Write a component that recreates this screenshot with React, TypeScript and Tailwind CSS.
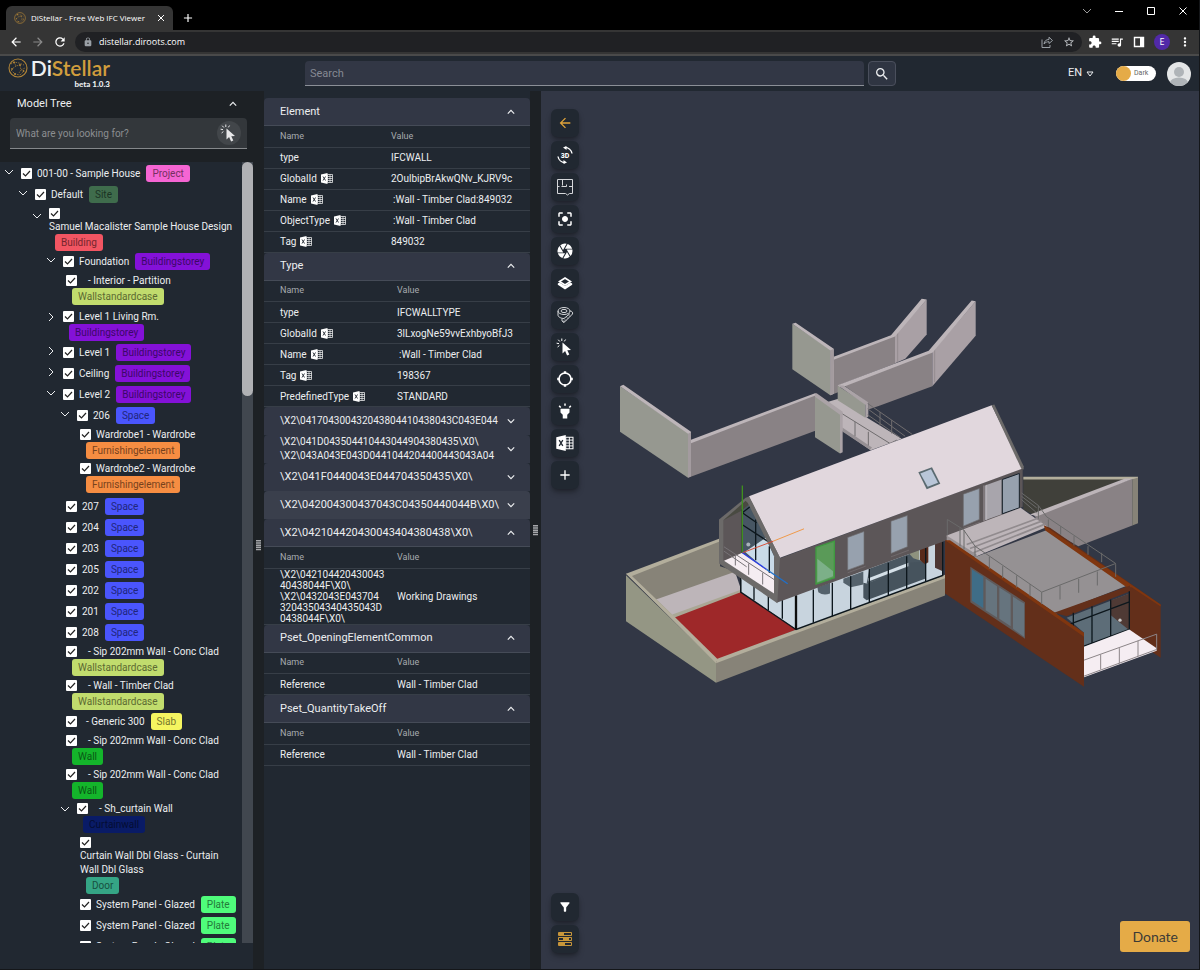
import { FC, ReactNode } from "react";
import clsx from "clsx";
import {
  MdAdd,
  MdArrowBack,
  MdArrowForward,
  MdCamera,
  MdCenterFocusStrong,
  MdExtension,
  MdFilterAlt,
  MdHighlight,
  MdLock,
  MdMoreVert,
  MdQueueMusic,
  MdRefresh,
  MdSearch,
  MdStarBorder,
} from "react-icons/md";

type Layout = "inline" | "below" | "wrapped";

interface TreeNode {
  id: string;
  label: string;
  kind: keyof typeof badgeColors;
  layout?: Layout;
  indentLabel?: boolean;
  open?: boolean;
  children?: TreeNode[];
}

const badgeColors = {
  Project: "bg-[#f565d3] text-[#76305f]",
  Site: "bg-[#3f6c4c] text-[#1b3424]",
  Building: "bg-[#f25562] text-[#74262d]",
  Buildingstorey: "bg-[#8411d8] text-[#3c0868]",
  Wallstandardcase: "bg-[#c1dc6d] text-[#5c6a32]",
  Space: "bg-[#4a55fd] text-[#20267c]",
  Furnishingelement: "bg-[#f68d42] text-[#76421d]",
  Slab: "bg-[#f5f560] text-[#77762c]",
  Wall: "bg-[#14b52b] text-[#0a5815]",
  Curtainwall: "bg-[#091b66] text-[#040d33]",
  Door: "bg-[#35a585] text-[#184f40]",
  Plate: "bg-[#4ffc7b] text-[#247a3a]",
};

const spaces: TreeNode[] = ["207", "204", "203", "205", "202", "201", "208"].map(
  (label) => ({ id: label, label, kind: "Space" })
);

const tree: TreeNode = {
  id: "project",
  label: "001-00 - Sample House",
  kind: "Project",
  open: true,
  children: [
    {
      id: "site",
      label: "Default",
      kind: "Site",
      open: true,
      children: [
        {
          id: "building",
          label: "Samuel Macalister Sample House Design",
          kind: "Building",
          layout: "wrapped",
          open: true,
          children: [
            {
              id: "foundation",
              label: "Foundation",
              kind: "Buildingstorey",
              open: true,
              children: [
                {
                  id: "partition",
                  label: "- Interior - Partition",
                  kind: "Wallstandardcase",
                  layout: "below",
                  indentLabel: true,
                },
              ],
            },
            {
              id: "living",
              label: "Level 1 Living Rm.",
              kind: "Buildingstorey",
              layout: "below",
              open: false,
            },
            { id: "level1", label: "Level 1", kind: "Buildingstorey", open: false },
            { id: "ceiling", label: "Ceiling", kind: "Buildingstorey", open: false },
            {
              id: "level2",
              label: "Level 2",
              kind: "Buildingstorey",
              open: true,
              children: [
                {
                  id: "206",
                  label: "206",
                  kind: "Space",
                  open: true,
                  children: [
                    {
                      id: "w1",
                      label: "Wardrobe1 - Wardrobe",
                      kind: "Furnishingelement",
                      layout: "below",
                    },
                    {
                      id: "w2",
                      label: "Wardrobe2 - Wardrobe",
                      kind: "Furnishingelement",
                      layout: "below",
                    },
                  ],
                },
                ...spaces,
                {
                  id: "sip1",
                  label: "- Sip 202mm Wall - Conc Clad",
                  kind: "Wallstandardcase",
                  layout: "below",
                  indentLabel: true,
                },
                {
                  id: "timber",
                  label: "- Wall - Timber Clad",
                  kind: "Wallstandardcase",
                  layout: "below",
                  indentLabel: true,
                },
                {
                  id: "generic",
                  label: "- Generic 300",
                  kind: "Slab",
                  indentLabel: true,
                },
                {
                  id: "sip2",
                  label: "- Sip 202mm Wall - Conc Clad",
                  kind: "Wall",
                  layout: "below",
                  indentLabel: true,
                },
                {
                  id: "sip3",
                  label: "- Sip 202mm Wall - Conc Clad",
                  kind: "Wall",
                  layout: "below",
                  indentLabel: true,
                },
                {
                  id: "curtain",
                  label: "- Sh_curtain Wall",
                  kind: "Curtainwall",
                  layout: "below",
                  indentLabel: true,
                  open: true,
                  children: [
                    {
                      id: "door",
                      label: "Curtain Wall Dbl Glass - Curtain Wall Dbl Glass",
                      kind: "Door",
                      layout: "wrapped",
                    },
                    { id: "p1", label: "System Panel - Glazed", kind: "Plate" },
                    { id: "p2", label: "System Panel - Glazed", kind: "Plate" },
                    { id: "p3", label: "System Panel - Glazed", kind: "Plate" },
                  ],
                },
              ],
            },
          ],
        },
      ],
    },
  ],
};

interface PropertyRow {
  name: string;
  value: string;
  excel?: boolean;
  indentValue?: boolean;
}

interface PropertyGroup {
  title: string;
  rows?: PropertyRow[];
  narrow?: boolean;
  highlighted?: boolean;
  longTitle?: boolean;
}

const groups: PropertyGroup[] = [
  {
    title: "Element",
    narrow: true,
    rows: [
      { name: "type", value: "IFCWALL" },
      { name: "GlobalId", value: "2OulbipBrAkwQNv_KJRV9c", excel: true },
      { name: "Name", value: ":Wall - Timber Clad:849032", excel: true, indentValue: true },
      { name: "ObjectType", value: ":Wall - Timber Clad", excel: true, indentValue: true },
      { name: "Tag", value: "849032", excel: true },
    ],
  },
  {
    title: "Type",
    rows: [
      { name: "type", value: "IFCWALLTYPE" },
      { name: "GlobalId", value: "3lLxogNe59vvExhbyoBfJ3", excel: true },
      { name: "Name", value: ":Wall - Timber Clad", excel: true, indentValue: true },
      { name: "Tag", value: "198367", excel: true },
      { name: "PredefinedType", value: "STANDARD", excel: true },
    ],
  },
  { title: "\\X2\\041704300432043804410438043C043E044", longTitle: true },
  {
    title:
      "\\X2\\041D043504410443044904380435\\X0\\ \\X2\\043A043E043D0441044204400443043A04",
    longTitle: true,
  },
  { title: "\\X2\\041F0440043E044704350435\\X0\\" },
  { title: "\\X2\\042004300437043C04350440044B\\X0\\", highlighted: true },
  {
    title: "\\X2\\042104420430043404380438\\X0\\",
    rows: [
      {
        name: "\\X2\\042104420430043\n40438044F\\X0\\\n\\X2\\0432043E043704\n32043504340435043D\n0438044F\\X0\\",
        value: "Working Drawings",
      },
    ],
  },
  {
    title: "Pset_OpeningElementCommon",
    rows: [{ name: "Reference", value: "Wall - Timber Clad" }],
  },
  {
    title: "Pset_QuantityTakeOff",
    rows: [{ name: "Reference", value: "Wall - Timber Clad" }],
  },
];

const Chevron: FC<{ dir: "up" | "down" | "right"; className?: string }> = ({
  dir,
  className,
}) => (
  <svg
    viewBox="0 0 10 10"
    className={clsx(
      "shrink-0 fill-none stroke-current",
      dir === "up" && "rotate-180",
      dir === "right" && "-rotate-90",
      className
    )}
  >
    <path d="M1 3l4 4 4-4" />
  </svg>
);

const ExcelIcon: FC<{ className?: string }> = ({ className }) => (
  <svg viewBox="0 0 24 22" className={clsx("shrink-0", className)}>
    <path d="M13 3h10v16H13z" fill="none" stroke="#fff" strokeWidth="1.4" />
    <path d="M13 7h10M13 11h10M13 15h10M18 3v16" stroke="#fff" strokeWidth="1.3" />
    <path d="M0 3l13-3v22L0 19z" fill="#fff" />
    <path d="M4 7l5 8M9 7l-5 8" stroke="#212831" strokeWidth="1.8" />
  </svg>
);

const CursorClickIcon: FC<{ className?: string }> = ({ className }) => (
  <svg viewBox="0 0 18 18" className={className}>
    <path d="M6.500 4.500v11l2.600-2.400 2 4.300 2.200-1-2-4.100 3.700-.2z" fill="currentColor" />
    <path
      d="M5.800.5v2.500M2.200 1.700l1.600 1.800M.6 5.200l2.400.4M9.600 1.500L8.300 3.400M1.600 9l1.800-1.500"
      fill="none"
      stroke="currentColor"
      strokeWidth="1"
    />
  </svg>
);

const PlanetIcon: FC<{ className?: string }> = ({ className }) => (
  <svg viewBox="0 0 20 20" className={clsx("shrink-0 fill-none stroke-[#b08437]", className)}>
    <circle cx="10" cy="10" r="9" strokeWidth="1.1" />
    <path
      d="M3 6l3-2 5 1 5 2M6 4l2 4 4-1M3 12l4 4 5 1 4-4M8 8l-4 3M12 7l1 5-2 3M13 12l4-2"
      strokeWidth=".7"
      strokeDasharray="1.6 1"
    />
    <g className="fill-[#b08437] stroke-none">
      <circle cx="6" cy="4.500" r="1" />
      <circle cx="12" cy="7" r="1" />
      <circle cx="7" cy="16" r="1" />
      <circle cx="15.500" cy="13" r=".9" />
      <circle cx="4" cy="11" r=".9" />
    </g>
  </svg>
);

const BrowserBar: FC = () => (
  <div className="font-['Open_Sans',sans-serif] text-white">
    <div className="flex h-[30px] items-end bg-black">
      <div className="ml-1.5 flex h-6 w-[167px] items-center rounded-t-md bg-[#353535] pl-2 pr-1.5">
        <PlanetIcon className="size-3" />
        <span className="ml-[5px] text-[8px] font-medium whitespace-nowrap">
          DiStellar - Free Web IFC Viewer
        </span>
        <button aria-label="Close tab" className="ml-auto p-0.5">
          <svg viewBox="0 0 8 8" className="size-2 stroke-current">
            <path d="M1 1l6 6M7 1L1 7" />
          </svg>
        </button>
      </div>
      <button aria-label="New tab" className="mb-[5px] ml-2">
        <MdAdd className="size-3.5" />
      </button>
      <div className="mb-3.5 ml-auto flex items-center gap-[22px] pr-[11px]">
        <button aria-label="Search tabs" className="text-[#9a9a9a]">
          <Chevron dir="down" className="size-2.5" />
        </button>
        <button aria-label="Minimize">
          <svg viewBox="0 0 10 10" className="size-2.5 stroke-current">
            <path d="M1 5.500h8" />
          </svg>
        </button>
        <button aria-label="Maximize">
          <svg viewBox="0 0 10 10" className="size-2.5 fill-none stroke-current">
            <path d="M1.500 1.500h7v7h-7z" />
          </svg>
        </button>
        <button aria-label="Close">
          <svg viewBox="0 0 10 10" className="size-2.5 stroke-current">
            <path d="M1.500 1.500l7 7M8.500 1.500l-7 7" />
          </svg>
        </button>
      </div>
    </div>
    <div className="flex h-[26px] items-center border-b-2 border-[#4a4a4a] bg-[#353535] pr-[7px] pl-[9px]">
      <button aria-label="Back">
        <MdArrowBack className="size-3.5" />
      </button>
      <button aria-label="Forward" className="ml-2 text-[#8a8a8a]">
        <MdArrowForward className="size-3.5" />
      </button>
      <button aria-label="Reload" className="ml-2">
        <MdRefresh className="size-3.5" />
      </button>
      <div className="ml-2 flex h-5 grow items-center rounded-full bg-[#202124] pr-[7px] pl-2">
        <MdLock className="size-2.5 text-[#9aa0a6]" />
        <input
          aria-label="Address"
          defaultValue="distellar.diroots.com"
          className="ml-1.5 w-0 grow bg-transparent text-[9px] font-medium outline-none"
        />
        <svg
          viewBox="0 0 12 12"
          className="size-3 fill-none stroke-[#9aa0a6]"
        >
          <path d="M1 3.500v8h8V9M3 8c.5-3 2-4.500 5-4.500V1.200L11.500 4.500 8 7.500V5.700C6 5.700 4.500 6.300 3 8z" />
        </svg>
        <MdStarBorder className="ml-2.5 size-3 text-[#c4c7cb]" />
      </div>
      <div className="ml-1.5 flex items-center gap-2">
        <MdExtension className="size-3.5" />
        <MdQueueMusic className="size-3.5" />
        <svg viewBox="0 0 14 14" className="size-3.5">
          <path d="M2.500 2.500h9v9h-9z" fill="none" stroke="#fff" strokeWidth="1.400" />
          <path d="M8 2h4v10H8z" fill="#fff" />
        </svg>
        <span className="grid size-4 place-items-center rounded-full bg-[#5129a8] text-[9px]">
          E
        </span>
        <MdMoreVert className="size-3.5" />
      </div>
    </div>
  </div>
);

const Header: FC = () => (
  <header className="flex h-9 items-center bg-[#212831]">
    <div className="flex w-[305px] shrink-0 pl-2">
      <PlanetIcon className="size-5" />
      <div className="w-[82px] font-[Lato,sans-serif] text-right">
        <div className="text-[21px] leading-5 font-semibold text-[#d19e3d]">
          <span className="text-[#eef0f2]">Di</span>Stellar
        </div>
        <div className="text-[8px] leading-3 font-black">beta 1.0.3</div>
      </div>
    </div>
    <input
      aria-label="Search"
      placeholder="Search"
      className="h-[25px] grow rounded-t-sm border-b border-[#8b8f97] bg-[#323745] px-[5px] text-[11px] outline-none placeholder:text-[#858993]"
    />
    <button
      aria-label="Run search"
      className="ml-1 grid h-[25px] w-7 place-items-center rounded-sm border border-[#4a4f5c] bg-[#2f3542]"
    >
      <MdSearch className="size-4" />
    </button>
    <div className="flex w-[303px] shrink-0 items-center justify-end pr-2">
      <button className="flex items-center gap-1 text-[11px]">
        EN
        <svg viewBox="0 0 8 6" className="h-1.5 w-2 fill-none stroke-current">
          <path d="M1 1h6L4 5z" />
        </svg>
      </button>
      <button
        role="switch"
        aria-checked="true"
        className="ml-[22px] flex h-[15px] w-10 items-center rounded-full bg-white text-[7px] text-[#666]"
      >
        <span className="mr-[3px] size-[15px] rounded-full bg-[#e5ab47]" />
        Dark
      </button>
      <button aria-label="Account" className="ml-[11px]">
        <svg viewBox="0 0 24 24" className="size-6">
          <clipPath id="avatar">
            <circle cx="12" cy="12" r="12" />
          </clipPath>
          <g clipPath="url(#avatar)">
            <path d="M0 0h24v24H0z" fill="#e4e6e7" />
            <circle cx="12" cy="10" r="5" fill="#afb4b8" />
            <ellipse cx="12" cy="21" rx="9" ry="5.500" fill="#afb4b8" />
          </g>
        </svg>
      </button>
    </div>
  </header>
);

const Badge: FC<{ kind: keyof typeof badgeColors; className?: string }> = ({
  kind,
  className,
}) => (
  <span
    className={clsx(
      "block h-[17px] w-fit shrink-0 rounded-[3px] px-1.5 text-[10px] leading-[17px]",
      badgeColors[kind],
      className
    )}
  >
    {kind}
  </span>
);

const Tick: FC = () => (
  <span className="grid size-[11px] shrink-0">
    <input
      type="checkbox"
      defaultChecked
      className="peer col-start-1 row-start-1 size-[11px] appearance-none rounded-[1px] bg-white"
    />
    <svg
      viewBox="0 0 11 11"
      className="pointer-events-none invisible col-start-1 row-start-1 size-[11px] fill-none stroke-[#222] peer-checked:visible"
    >
      <path d="M2 5.500l2.500 2.500L9 3" strokeWidth="1.200" />
    </svg>
  </span>
);

const Node: FC<{ node: TreeNode }> = ({ node }) => {
  const layout = node.layout ?? "inline";
  const isLeaf = node.open === undefined;
  return (
    <li>
      <div className={clsx("flex", isLeaf ? "pl-2.5" : "pl-1")}>
        {!isLeaf && (
          <button
            aria-label={node.open ? "Collapse" : "Expand"}
            className={clsx(
              "flex h-[18px] w-[17px] shrink-0 items-center",
              layout === "wrapped" && "mt-0.5"
            )}
          >
            <Chevron dir={node.open ? "down" : "right"} className="size-2.5" />
          </button>
        )}
        {layout === "inline" && (
          <div className="flex h-[21px] items-center">
            <label className="flex items-center gap-[5px] whitespace-nowrap">
              <Tick />
              <span className={clsx(node.indentLabel && "pl-1")}>{node.label}</span>
            </label>
            <Badge kind={node.kind} className="ml-1.5" />
          </div>
        )}
        {layout === "below" && (
          <div className="h-[34px]">
            <label className="flex h-4 items-center gap-[5px] whitespace-nowrap">
              <Tick />
              <span className={clsx(node.indentLabel && "pl-1.5")}>{node.label}</span>
            </label>
            <Badge kind={node.kind} className="ml-1.5" />
          </div>
        )}
        {layout === "wrapped" && (
          <div className="pt-px pr-2">
            <label className="block leading-[14px]">
              <span className="flex h-[14px] items-center">
                <Tick />
              </span>
              {node.label}
            </label>
            <Badge kind={node.kind} className="ml-1.5" />
          </div>
        )}
      </div>
      {node.children && (
        <ul className="pb-0.5 pl-3.5">
          {node.children.map((child) => (
            <Node key={child.id} node={child} />
          ))}
        </ul>
      )}
    </li>
  );
};

const ModelTree: FC = () => (
  <aside className="flex w-[253px] shrink-0 flex-col bg-[#212831]">
    <div className="h-[71px] shrink-0 bg-[#1d2125] pt-1 pr-1.5 pl-2.5">
      <button className="flex h-[18px] w-full items-center justify-between pr-2.5 pl-[7px] text-[11px]">
        Model Tree
        <Chevron dir="up" className="size-2 stroke-[1.5]" />
      </button>
      <div className="mt-[5px] flex h-[31px] items-center justify-between rounded-t-sm border-b border-[#85888b] bg-[#33373b] px-1.5">
        <input
          aria-label="What are you looking for?"
          placeholder="What are you looking for?"
          className="w-0 grow bg-transparent text-[10px] outline-none placeholder:text-[#8b8e91]"
        />
        <button
          aria-label="Pick in model"
          className="grid size-6 place-items-center rounded-full bg-[#42464a]"
        >
          <CursorClickIcon className="size-[18px] text-[#e8e8ea]" />
        </button>
      </div>
    </div>
    <div className="mb-[26px] flex min-h-0 grow">
      <div className="w-0 grow overflow-hidden pt-px text-[10px]">
        <ul>
          <Node node={tree} />
        </ul>
      </div>
      <div aria-hidden="true" className="w-[11px] bg-[#41474f]">
        <div className="h-[30%] rounded-full bg-[#b0b1b4]" />
      </div>
    </div>
  </aside>
);

const Splitter: FC<{ className?: string }> = ({ className }) => (
  <div
    role="separator"
    aria-orientation="vertical"
    className={clsx(
      "flex w-[11px] shrink-0 cursor-col-resize items-center justify-center bg-[#1d2125]",
      className
    )}
  >
    <svg viewBox="0 0 5 11" className="h-[11px] w-[5px] stroke-[#f0f0f2] stroke-[1.3]">
      <path d="M1 0v11M3 0v11M5 0v11" strokeDasharray="1.500 .7" />
    </svg>
  </div>
);

const PropertyGroupPanel: FC<{ group: PropertyGroup }> = ({ group }) => (
  <section>
    <button
      className={clsx(
        "flex h-7 w-full items-center justify-between rounded-t-sm pr-[15px] pl-4 text-left leading-[14px]",
        group.longTitle ? "text-[10px]" : "text-[11px]",
        group.highlighted ? "bg-[#3a3f4c]" : "bg-[#323745]",
        group.rows && "border-b border-[#454b57]"
      )}
    >
      <span className="w-0 grow">{group.title}</span>
      <Chevron dir={group.rows ? "up" : "down"} className="size-2 stroke-[1.5]" />
    </button>
    {group.rows && (
      <table className="w-full table-fixed border-collapse text-left">
        <thead>
          <tr className="h-[21px] border-b border-[#373e47] text-[9px] text-[#a7abaf]">
            <th className={clsx("p-0 pl-4 font-normal", group.narrow ? "w-[127px]" : "w-[133px]")}>
              Name
            </th>
            <th className="p-0 font-normal">Value</th>
          </tr>
        </thead>
        <tbody>
          {group.rows.map((row) => (
            <tr key={row.name} className="h-[21px] border-b border-[#373e47]">
              <td className="p-0 pl-4 leading-[11px]">
                <span className="flex items-center gap-1">
                  <span className="whitespace-pre-line">{row.name}</span>
                  {row.excel && <ExcelIcon className="h-[11px] w-3" />}
                </span>
              </td>
              <td className={clsx("p-0 whitespace-nowrap", row.indentValue && "pl-0.5")}>
                {row.value}
              </td>
            </tr>
          ))}
        </tbody>
      </table>
    )}
  </section>
);

const PropertiesPanel: FC = () => (
  <section className="w-[266px] shrink-0 overflow-hidden bg-[#212831] pt-[7px] text-[10px]">
    {groups.map((group) => (
      <PropertyGroupPanel key={group.title} group={group} />
    ))}
  </section>
);

const Rotate3dIcon: FC = () => (
  <svg viewBox="0 0 18 18" className="size-[18px]">
    <path d="M2 10.500A7.200 7.200 0 0 0 9 16.500M16 7.500A7.200 7.200 0 0 0 9 1.500" fill="none" stroke="#fff" strokeWidth="1.400" />
    <path d="M7.500 14l3.500 2.500-3.500 1.500zM10.500 0L7 1.500 10.500 4z" fill="#fff" />
    <text x="9" y="11.500" textAnchor="middle" fontSize="7" fontWeight="800" fill="#fff">
      3D
    </text>
  </svg>
);

const PlanIcon: FC = () => (
  <svg viewBox="0 0 18 18" className="size-[18px] fill-none stroke-[#d5d7da]">
    <path d="M1.500 15.500v-14h15v14h-3M1.500 15.500h8l2 1.500 2-1.500M6.500 1.500v6M1.500 8.500h2M5.500 8.500h5M10.500 6.500v2M13 8.500h3.500" />
  </svg>
);

const LayersIcon: FC = () => (
  <svg viewBox="0 0 18 18" className="size-[18px]">
    <path d="M9 4l5.500 3.500L9 11 3.500 7.500z" fill="none" stroke="#fff" strokeWidth="1.600" />
    <path d="M1.800 9.500L3.500 8.500 9 12l5.500-3.500 1.700 1v1.300L9 15.500l-7.200-4.700z" fill="#fff" />
  </svg>
);

const TapeIcon: FC = () => (
  <svg viewBox="0 0 18 18" className="size-[18px] fill-none stroke-[#d5d7da]">
    <ellipse cx="8" cy="5" rx="6" ry="3.500" />
    <ellipse cx="8" cy="5" rx="3" ry="1.600" />
    <path d="M2 5v4c0 2 3 3.500 6 3.500L14 7.500M14 5c2 0 3 1.500 2.500 3L8 16.500l-2-1.500v-2.500M8 16.500v-2M10 14.500l-1-1M12 12.500l-1-1M14 10.500l-1-1" />
  </svg>
);

const TargetIcon: FC = () => (
  <svg viewBox="0 0 18 18" className="size-[18px] fill-none stroke-white">
    <circle cx="9" cy="9" r="6" strokeWidth="1.700" />
    <path d="M9 1.200v2.500M9 14.300v2.500M1.200 9h2.500M14.300 9h2.500" strokeWidth="2.400" />
  </svg>
);

const ServerIcon: FC = () => (
  <svg viewBox="0 0 18 18" className="size-[18px] fill-none stroke-[#c8963a]">
    <path d="M2.500 2.500h13v3h-13zM2.500 7.500h13v3h-13zM2.500 12.500h13v3h-13z" />
    <path d="M3 4h5M7 9h6M3 14h6" strokeWidth="2" />
  </svg>
);

const ToolButton: FC<{ label: string; children: ReactNode }> = ({ label, children }) => (
  <button
    aria-label={label}
    className="grid size-7 place-items-center rounded-md bg-[#212831] shadow-md shadow-black/30"
  >
    {children}
  </button>
);

// Isometric house, drawn back to front
const HouseModel: FC = () => (
  <svg
    viewBox="-177 -594 1974 2631"
    className="absolute inset-0 size-full"
    role="img"
    aria-label="3D model of the sample house"
  >
    {/* upper retaining walls */}
    <path d="M701 206L885 134V222L720 286V306L691 317z" fill="#898285" />
    <path d="M885 136L980 30V135L916 208 885 221z" fill="#a9a0a5" />
    <path d="M893 130v88" stroke="#898285" strokeWidth="2" />
    <path d="M701 202L873 137 965 28 980 30 885 141 701 211z" fill="#bdb5b9" />
    <path d="M577 103L691 181V317L577 239z" fill="#969890" />
    <path d="M577 103L587 100 701 178V313L691 317V183z" fill="#bdb5b9" />
    <path d="M691 183L701 178V313L691 317z" fill="#a39b9f" />
    <path d="M733 289L997 187V290L840 348 805 360V340z" fill="#898285" />
    <path d="M997 187L1127 35V139L997 290z" fill="#a9a0a5" />
    <path d="M1004 178v100" stroke="#898285" strokeWidth="2" />
    <path d="M713 287L986 184 1115 33 1127 35 998 189 733 291 720 294z" fill="#bdb5b9" />

    {/* bridge */}
    <path d="M680 338L715 328 800 384 905 448 812 482 727 424z" fill="#bdb5b9" />
    <path d="M727 414L816 474 810 481 727 426z" fill="#969094" />
    <path d="M713 289L796 342V385L713 332z" fill="#969890" />
    <path d="M713 287L731 288 805 338V382L796 386V346z" fill="#aba3a7" />
    <path
      d="M722 370L870 462 890 452M765 397V440M805 427V468M803 342L937 435M803 358L915 440M803 376L900 444M840 368v40M875 392v40"
      fill="none"
      stroke="#6f6c6e"
      strokeWidth="3"
    />

    {/* left retaining wall */}
    <path d="M273 456L648 314V423L264 565z" fill="#898285" />
    <path d="M273 451L645 311 652 316 273 461z" fill="#bdb5b9" />
    <path d="M60 290L264 430V565L60 427z" fill="#969890" />
    <path d="M60 290L70 286 273 427V461L264 565V433z" fill="#bdb5b9" />
    <path d="M264 433L273 428V561L264 565z" fill="#a39b9f" />
    <path d="M645 318L720 372V492L645 443z" fill="#969890" />
    <path d="M645 312L650 311 728 367V488L720 492V376L645 322z" fill="#aba3a7" />

    {/* garden to the right */}
    <path d="M1270 564H1582L1300 676 1270 660z" fill="#40403a" />
    <path d="M1270 562H1614V570H1270z" fill="#b3ae9c" />
    <path d="M1300 674L1597 568V708L1435 770 1320 705z" fill="#898285" />
    <path d="M1290 675L1575 567H1600L1312 680z" fill="#bdb5b9" />
    <path d="M1597 570L1614 564V701L1597 708z" fill="#878378" />

    {/* garden to the left */}
    <path d="M85 856L360 752V830L420 850 170 932z" fill="#878378" />
    <path d="M168 930L405 847 425 905 222 982z" fill="#bdb5b9" />
    <path d="M78 853L357 748V757L90 862z" fill="#b3ae9c" />
    <path d="M217 975L425 900V910L225 987z" fill="#aaa795" />
    <path d="M222 985L422 908 590 1020 352 1112z" fill="#9e2829" />
    <path d="M78 857L348 1118V1180L78 995z" fill="#949684" />
    <path d="M78 853L92 856 220 978 354 1110 348 1121z" fill="#b3ae9c" />
    <path d="M348 1117L1035 860V918L348 1180z" fill="#878378" />
    <path d="M352 1108L1035 856V866L348 1121z" fill="#b3ae9c" />

    {/* ground floor glazing */}
    <path d="M422 860L590 920V1020L422 908z" fill="#cbd8e2" />
    <path d="M590 915L1028 745V858L590 1020z" fill="#c8d4de" />
    <path d="M652 893L690 880V912Q670 920 655 908z" fill="#55626c" />
    <path d="M730 868L790 846V885L752 893 730 880z" fill="#55626c" />
    <path d="M808 838L930 793 975 822 800 882z" fill="#4a5761" />
    <path d="M800 882L930 832V820L975 815V868L800 932 790 925V880z" fill="#46535d" />
    <path d="M805 866L925 820V830L805 876z" fill="#d5e0e8" />
    <path d="M925 790L958 777V812L940 806z" fill="#8e927e" />
    <path d="M960 776L985 766V818L975 824 960 812z" fill="#582a1a" />
    <path d="M1005 758L1028 750V845L1005 835z" fill="#4d3632" />
    <path
      d="M422 865V908M462 885V932M505 900V962M547 920V988M640 900V1000M697 880V980M752 860V960M808 838V938M865 820V918M920 800V898M977 775V876"
      stroke="#0d171d"
      strokeWidth="4"
    />
    <path d="M422 870V908L588 1020 1028 858V755" fill="none" stroke="#0d171d" strokeWidth="4" />
    <path d="M588 918V1020" stroke="#0d0d0d" strokeWidth="7" />

    {/* first floor volume */}
    <path d="M530 810L1268 536V652L1040 752 530 940z" fill="#5c5658" />
    <path d="M357 690L437 625 450 620 540 805 532 941 357 822z" fill="#6c6a69" />
    <path d="M370 692L445 636 522 792V912L370 812z" fill="#5c5658" />
    <path d="M370 692L437 634 447 645 427 662z" fill="#494a41" />
    <path d="M427 662L449 645 522 798V880L427 790z" fill="#475663" />
    <path d="M435 787L497 745 522 800V862z" fill="#c9dbe8" />
    <path d="M372 814L427 790 522 858V912z" fill="#f5edf2" />
    <path
      d="M427 670L450 652M427 670L470 700M427 706L510 760M467 690V812M508 770V850M427 660V790"
      fill="none"
      stroke="#0d171d"
      strokeWidth="4"
    />
    <path d="M372 772L522 870M372 785L440 832M406 795V828M446 822V856M488 850V885" stroke="#777377" strokeWidth="3" />
    <circle cx="445" cy="765" r="6" fill="#aab4bb" />
    <path d="M447 620L1175 347 1268 537 540 805z" fill="#e1d7dd" />
    <path d="M447 620L540 805 530 812 440 634z" fill="#6c6a69" />
    <path d="M1175 347L1183 345 1271 530V540L1264 538z" fill="#6c6a69" />
    <path d="M955 548L996 533 1021 583 980 599z" fill="#5a6a70" />
    <path d="M961 552L993 539 1014 580 983 592z" fill="#b9c6d8" />

    {/* openings in the long facade */}
    <g fill="#97a1ae" stroke="#6e6c70" strokeWidth="2">
      <path d="M743 744L792 726V824L743 842z" />
      <path d="M873 695L922 678V772L873 792z" />
      <path d="M1090 614L1138 597V690L1090 710z" />
    </g>
    <path d="M1155 588L1205 570V674L1155 692z" fill="#a8a5ac" />
    <path d="M1152 588V695M1160 586V692" stroke="#c4bcc1" strokeWidth="2" />
    <path d="M1207 570L1258 552V655L1207 673z" fill="#97a1ae" stroke="#17212a" strokeWidth="3" />
    <path d="M743 850L797 830M873 802L927 782M1090 716L1140 698" stroke="#787376" strokeWidth="2" />
    <path d="M648 774L703 755V865L648 884z" fill="#5a9a58" stroke="#3f9a40" strokeWidth="4" />
    <path d="M652 808L699 845V860L652 878z" fill="#7cb088" />

    {/* terrace and timber box */}
    <path d="M1040 738L1262 655 1342 712 1130 800 1042 750z" fill="#bdb5b9" />
    <path d="M1040 738V754L1130 806V795z" fill="#989194" />
    <path d="M1100 765L1320 684M1110 777L1325 695M1120 790L1335 704" stroke="#918b8e" strokeWidth="5" />
    <path d="M1120 805L1345 720 1582 888 1368 972z" fill="#959193" />
    <path d="M1332 708L1350 715 1682 945V1105L1590 1042V895L1575 886 1345 725z" fill="#632f1a" />
    <path d="M1332 708L1682 945V951L1595 893 1580 893 1335 722z" fill="#80360f" />
    <path d="M1362 970L1590 888V905L1400 980z" fill="#632f1a" />
    <path d="M1400 985L1588 912V1022L1452 1075V1030z" fill="#5d6d78" />
    <path d="M1530 934L1588 912V1022L1560 1000 1530 975z" fill="#4f3a35" />
    <path d="M1410 1004L1588 937M1420 970V1010M1476 950V1060M1532 930V1040M1588 905V1022M1452 1070L1588 1020" stroke="#0d171d" strokeWidth="4" />
    <path d="M1452 1072L1588 1020 1670 1076V1084L1452 1163z" fill="#f5edf2" />
    <path d="M1452 1112L1670 1034V1080M1502 1095V1140M1558 1076V1122M1614 1054V1100M1452 1160L1670 1080" fill="none" stroke="#8c8588" strokeWidth="3" />
    <circle cx="1560" cy="992" r="5" fill="#c8c8c8" />
    <path d="M1035 752L1452 1036V1192L1035 912z" fill="#632f1a" />
    <path d="M1035 752L1050 752 1452 1030V1042z" fill="#80360f" />
    <path d="M1111 832L1275 938V1048L1111 938z" fill="#5f5a5b" />
    <path d="M1116 840L1150 862V956L1116 934z" fill="#3f6d87" />
    <path d="M1157 868L1191 890V984L1157 962zM1198 894L1232 916V1010L1198 988zM1239 922L1272 942V1042L1239 1018z" fill="#66747e" />
    <path
      d="M1042 690L1090 720 1125 770 1325 908 1547 822 1340 682 1315 648 1264 610M1042 690V738M1080 716V770M1092 722V780M1125 772V802M1168 802V838M1208 830V866M1250 858V894M1290 884V920M1325 908V944M1380 888V930M1436 868V910M1492 846V888M1547 824V862M1505 790V818M1464 770V796M1422 740V768M1382 710V736M1345 690V712M1315 648V688M1264 620L1310 655M1264 630L1310 670"
      fill="none"
      stroke="#6a6a6a"
      strokeWidth="3"
    />

    {/* axes */}
    <path d="M427 790V588" stroke="#3f8f1f" strokeWidth="4" />
    <path d="M427 790L520 755" stroke="#d8503a" strokeWidth="3" />
    <path d="M520 755L612 718" stroke="#f09a4a" strokeWidth="3" />
    <path d="M427 790L500 840" stroke="#2b3fe0" strokeWidth="4" />
    <path d="M500 840L563 883" stroke="#2070c8" strokeWidth="4" />
  </svg>
);

const Viewer: FC = () => (
  <main className="relative flex grow justify-between bg-[#323745]">
    <HouseModel />
    <div className="relative flex flex-col justify-between pt-[18px] pb-4 pl-2.5">
      <div className="flex flex-col gap-1">
        <ToolButton label="Back">
          <MdArrowBack className="size-4 text-[#dfa33a]" />
        </ToolButton>
        <ToolButton label="Rotate">
          <Rotate3dIcon />
        </ToolButton>
        <ToolButton label="Floor plans">
          <PlanIcon />
        </ToolButton>
        <ToolButton label="Fit to view">
          <MdCenterFocusStrong className="size-[18px] text-white" />
        </ToolButton>
        <ToolButton label="Snapshot">
          <MdCamera className="size-[18px] text-white" />
        </ToolButton>
        <ToolButton label="Sections">
          <LayersIcon />
        </ToolButton>
        <ToolButton label="Measure">
          <TapeIcon />
        </ToolButton>
        <ToolButton label="Select">
          <CursorClickIcon className="size-[18px] text-white" />
        </ToolButton>
        <ToolButton label="Locate">
          <TargetIcon />
        </ToolButton>
        <ToolButton label="Highlight">
          <MdHighlight className="size-[18px] text-white" />
        </ToolButton>
        <ToolButton label="Export to Excel">
          <ExcelIcon className="h-4 w-[18px]" />
        </ToolButton>
        <ToolButton label="Add">
          <MdAdd className="size-4 text-white" />
        </ToolButton>
      </div>
      <div className="flex flex-col gap-1">
        <ToolButton label="Filter">
          <MdFilterAlt className="size-3.5 text-white" />
        </ToolButton>
        <ToolButton label="Properties">
          <ServerIcon />
        </ToolButton>
      </div>
    </div>
    <button className="relative mr-[9px] mb-[17px] h-[31px] self-end rounded-[3px] bg-[#e5ab47] px-3 font-[Lato,sans-serif] text-sm text-[#3c3a36]">
      Donate
    </button>
  </main>
);

const App: FC = () => (
  <div className="flex h-screen flex-col overflow-hidden border-r border-b border-[#141619] bg-[#212831] font-[Roboto,'Open_Sans',sans-serif] text-[#eceef0]">
    <BrowserBar />
    <Header />
    <div className="flex min-h-0 grow">
      <ModelTree />
      <Splitter className="pt-[30px]" />
      <PropertiesPanel />
      <Splitter />
      <Viewer />
    </div>
  </div>
);

export default App;
